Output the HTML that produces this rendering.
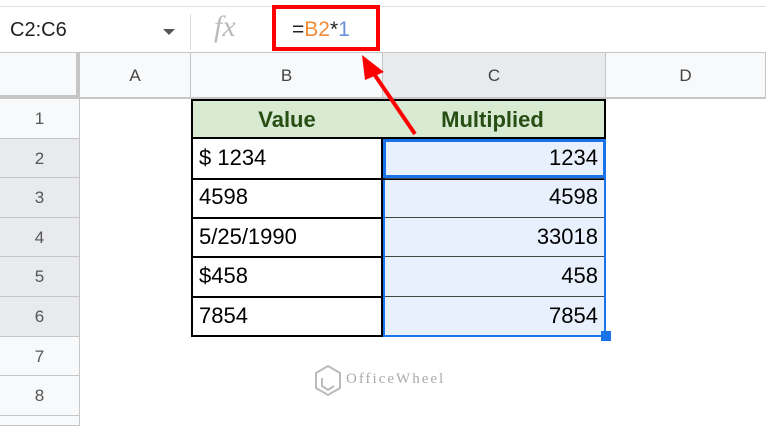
<!DOCTYPE html><html><head><style>
body{margin:0;width:766px;height:421px;overflow:hidden;background:#fff;font-family:"Liberation Sans",Arial,sans-serif;position:relative}
.a{position:absolute;box-sizing:border-box}
.rh{left:0;width:80px;text-align:center;color:#555;font-size:17px;border-bottom:1px solid #c6c6c6;border-right:1px solid #c6c6c6}
.ch{top:53px;height:46px;line-height:46px;text-align:center;color:#444;font-size:17px;border-right:1px solid #c6c6c6;border-bottom:2px solid #c6c6c6;background:#f8f9fa}
.c{font-size:22px;color:#000;padding:0 6px;line-height:38px}
</style></head><body>
<div class="a" style="left:0;top:0;width:766px;height:7px;background:#fff;border-bottom:1px solid #e0e0e0"></div>
<div class="a" style="left:10px;top:19px;font-size:20px;color:#222">C2:C6</div>
<div class="a" style="left:163px;top:29px;width:0;height:0;border-left:6px solid transparent;border-right:6px solid transparent;border-top:6px solid #555"></div>
<div class="a" style="left:190px;top:14px;width:1px;height:36px;background:#ddd"></div>
<div class="a" style="left:214px;top:10px;font-size:30px;font-style:italic;color:#bbb;font-family:'Liberation Serif',serif">fx</div>
<div class="a" style="left:0;top:52px;width:766px;height:1px;background:#c6c6c6"></div>
<div class="a" style="left:272px;top:5px;width:108px;height:46px;border:4px solid #f00"></div>
<div class="a" style="left:292px;top:18px;font-size:21px;color:#222">=<span style="color:#f28b36">B2</span>*<span style="color:#6a8fd8">1</span></div>
<div class="a" style="left:0;top:53px;width:80px;height:46px;background:#f8f9fa;border-right:4px solid #c6c6c6;border-bottom:4px solid #c6c6c6"></div>
<div class="a ch" style="left:80px;width:111px">A</div>
<div class="a ch" style="left:191px;width:192px">B</div>
<div class="a ch" style="left:383px;width:223px;background:#e8eaed">C</div>
<div class="a ch" style="left:606px;width:160px">D</div>
<div class="a rh" style="top:99px;height:40px;line-height:40px;background:#f8f9fa">1</div>
<div class="a rh" style="top:139px;height:39px;line-height:39px;background:#e8eaed">2</div>
<div class="a rh" style="top:178px;height:40px;line-height:40px;background:#e8eaed">3</div>
<div class="a rh" style="top:218px;height:39px;line-height:39px;background:#e8eaed">4</div>
<div class="a rh" style="top:257px;height:40px;line-height:40px;background:#e8eaed">5</div>
<div class="a rh" style="top:297px;height:40px;line-height:40px;background:#e8eaed">6</div>
<div class="a rh" style="top:337px;height:39px;line-height:39px;background:#f8f9fa">7</div>
<div class="a rh" style="top:376px;height:40px;line-height:40px;background:#f8f9fa">8</div>
<div class="a rh" style="top:416px;height:10px;background:#f8f9fa"></div>
<div class="a" style="left:191px;top:99px;width:192px;height:40px;background:#d9ead3;border:2px solid #000;text-align:center;font-weight:bold;font-size:22px;line-height:38px;color:#274e13">Value</div>
<div class="a" style="left:381px;top:99px;width:225px;height:40px;background:#d9ead3;border:2px solid #000;border-left:none;text-align:center;font-weight:bold;font-size:22px;line-height:38px;color:#274e13">Multiplied</div>
<div class="a" style="left:191px;top:139px;width:192px;height:198px;border:2px solid #000;border-top:none"></div>
<div class="a" style="left:383px;top:139px;width:223px;height:198px;background:#e8f0fe;border:2px solid #1a73e8;border-top:none;border-left:2px solid #1a73e8"></div>
<div class="a" style="left:383px;top:139px;width:223px;height:39px;border:3px solid #1a73e8"></div>
<div class="a" style="left:193px;top:178px;width:411px;height:2px;background:#000;"></div>
<div class="a" style="left:193px;top:217px;width:190px;height:2px;background:#000"></div>
<div class="a" style="left:193px;top:256px;width:190px;height:2px;background:#000"></div>
<div class="a" style="left:193px;top:296px;width:190px;height:2px;background:#000"></div>
<div class="a" style="left:385px;top:217px;width:219px;height:1px;background:#444"></div>
<div class="a" style="left:385px;top:256px;width:219px;height:1px;background:#444"></div>
<div class="a" style="left:385px;top:296px;width:219px;height:1px;background:#444"></div>
<div class="a" style="left:385px;top:178px;width:219px;height:1px;background:#444"></div>
<div class="a c" style="left:193px;top:139px">$ 1234</div>
<div class="a c" style="left:193px;top:178px">4598</div>
<div class="a c" style="left:193px;top:218px">5/25/1990</div>
<div class="a c" style="left:193px;top:257px">$458</div>
<div class="a c" style="left:193px;top:297px">7854</div>
<div class="a c" style="right:162px;top:139px;text-align:right">1234</div>
<div class="a c" style="right:162px;top:178px;text-align:right">4598</div>
<div class="a c" style="right:162px;top:218px;text-align:right">33018</div>
<div class="a c" style="right:162px;top:257px;text-align:right">458</div>
<div class="a c" style="right:162px;top:297px;text-align:right">7854</div>
<div class="a" style="left:601px;top:331px;width:10px;height:10px;background:#1a73e8"></div>
<svg class="a" style="left:0;top:0" width="766" height="421"><line x1="415" y1="134" x2="370" y2="68" stroke="#f00" stroke-width="4"/><polygon points="362,55 384,72 365,80" fill="#f00"/>
<g stroke="#bbb" stroke-width="2" fill="none"><polygon points="328,366 340,373 340,388 328,395 316,388 316,373"/><path d="M322,378 v8 l6,4 l6,-4"/></g></svg>
<div class="a" style="left:346px;top:371px;font-size:15px;letter-spacing:2px;color:#aaa;font-family:'Liberation Serif',serif">OfficeWheel</div>
</body></html>
